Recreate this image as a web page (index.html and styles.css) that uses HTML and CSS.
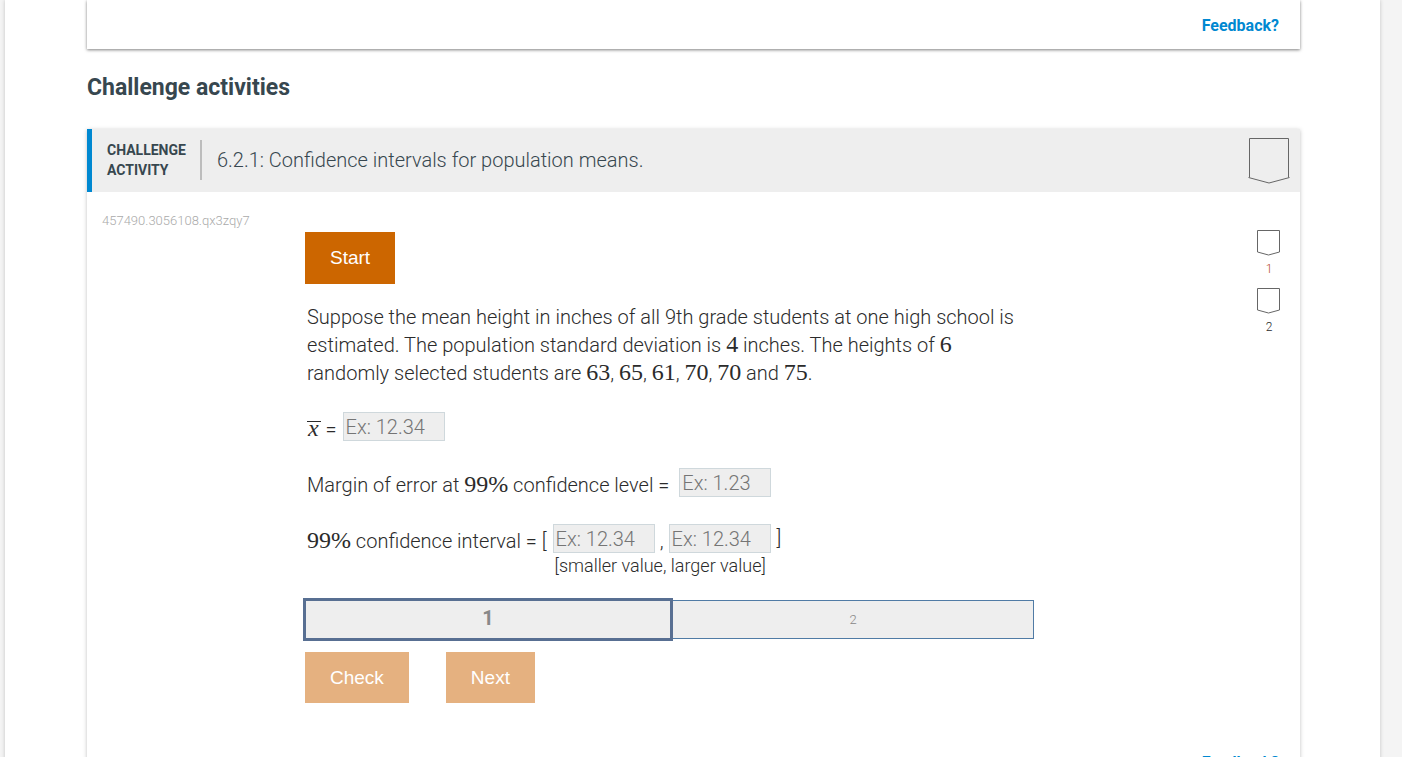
FILE: index.html
```html
<!DOCTYPE html>
<html lang="en">
  <head>
    <meta charset="UTF-8" />
    <meta name="viewport" content="width=device-width, initial-scale=1.0" />
    <title>Challenge activities</title>
    <link rel="stylesheet" href="styles.css" />
  </head>
  <body>
    <main class="page">
      <section class="card card-previous">
        <a class="feedback" href="#">Feedback?</a>
      </section>

      <h2 class="section-title">Challenge activities</h2>

      <section class="card activity">
        <header class="activity-header">
          <div class="activity-type">CHALLENGE<br />ACTIVITY</div>
          <h3 class="activity-title">6.2.1: Confidence intervals for population means.</h3>
          <svg class="badge-large" width="42" height="46" viewBox="0 0 42 46">
            <path d="M1.5 39.5V.5h39v39M.5 39.5l20.5 5.5 20.5-5.5" />
          </svg>
        </header>

        <div class="activity-body">
          <div class="activity-id">457490.3056108.qx3zqy7</div>

          <form class="question">
            <button class="btn" type="button">Start</button>

            <div class="prompt">
              <p class="statement">
                Suppose the mean height in inches of all 9th grade students at one high school is
                estimated. The population standard deviation is <span class="math">4</span> inches.
                The heights of <span class="math">6</span> randomly selected students are
                <span class="math">63</span>, <span class="math">65</span>,
                <span class="math">61</span>, <span class="math">70</span>,
                <span class="math">70</span> and <span class="math">75</span>.
              </p>

              <div class="row">
                <label for="mean"><span class="math mean">x</span> =</label>
                <input type="text" id="mean" placeholder="Ex: 12.34" />
              </div>

              <div class="row row-margin">
                <label for="margin">Margin of error at <span class="math">99%</span> confidence level =</label>
                <input class="short" type="text" id="margin" placeholder="Ex: 1.23" />
              </div>

              <div class="row">
                <label for="lower"><span class="math">99%</span> confidence interval = [</label>
                <div class="interval">
                  <div class="interval-fields">
                    <input type="text" id="lower" placeholder="Ex: 12.34" />
                    <label class="comma" for="upper">,</label>
                    <input type="text" id="upper" placeholder="Ex: 12.34" />
                  </div>
                  <div class="hint">[smaller value, larger value]</div>
                </div>
                <span class="bracket">]</span>
              </div>
            </div>

            <div class="steps">
              <div class="step current">1</div>
              <div class="step">2</div>
            </div>

            <div class="actions">
              <button class="btn" type="button" disabled>Check</button>
              <button class="btn" type="button" disabled>Next</button>
            </div>
          </form>

          <div class="levels">
            <div class="level">
              <svg width="24" height="27" viewBox="0 0 24 27">
                <path d="M.5 22V.5h22V22L11.5 25z" />
              </svg>
              <span class="level-current">1</span>
            </div>
            <div class="level">
              <svg width="24" height="27" viewBox="0 0 24 27">
                <path d="M.5 22V.5h22V22L11.5 25z" />
              </svg>
              <span>2</span>
            </div>
          </div>
        </div>

        <a class="feedback" href="#">Feedback?</a>
      </section>
    </main>
  </body>
</html>
```
FILE: styles.css
```css
* {
  box-sizing: border-box;
}

body {
  margin: 0;
  height: 100vh;
  overflow: hidden;
  padding: 0 22px 0 5px;
  background-color: #f4f4f4;
  font-family: Roboto, "Liberation Sans", sans-serif;
  font-size: 20px;
  font-weight: 300;
  line-height: 28px;
  color: #2b2b2b;
}

.page {
  padding: 0 80px 0 82px;
  background: #fff;
  box-shadow: 0 0 4px rgba(0, 0, 0, 0.2);
}

.card {
  display: flex;
  flex-direction: column;
  background: #fff;
  box-shadow: 0 1px 4px rgba(0, 0, 0, 0.25);
}

.card-previous {
  padding: 12px 0 9px;
  box-shadow: 0 1px 3px rgba(0, 0, 0, 0.5);
}

.feedback {
  align-self: flex-end;
  margin-right: 21px;
  font-size: 16px;
  font-weight: 700;
  color: #0088d1;
  text-decoration: none;
}

.section-title {
  margin: 25px 0 27px;
  font-size: 23px;
  font-weight: 700;
  color: #37474f;
}

.activity {
  padding-bottom: 10px;
}

.activity-header {
  display: flex;
  align-items: center;
  height: 63px;
  padding: 0 10px 2px 15px;
  border-left: 5px solid #0088d1;
  background: #eee;
  color: #37474f;
}

.activity-type {
  padding-right: 14px;
  border-right: 2px solid #bdbdbd;
  font-size: 14px;
  font-weight: 700;
  line-height: 20px;
}

.activity-title {
  flex: 1;
  margin: 0 0 0 15px;
  font-size: 20px;
  font-weight: 300;
}

svg {
  fill: none;
  stroke: #666;
}

.badge-large {
  align-self: flex-end;
  margin-bottom: 6px;
}

.activity-body {
  display: grid;
  grid-template-columns: 201px minmax(0, 731px) 1fr;
  padding: 15px 19px 46px 15px;
}

.activity-id {
  font-size: 13px;
  color: #aaa;
}

.question {
  padding-top: 25px;
}

.btn {
  display: block;
  height: 52px;
  margin-left: 2px;
  padding: 0 25px;
  border: none;
  background: #cc6600;
  color: #fff;
  font-family: "Liberation Sans", Arial, sans-serif;
  font-size: 19px;
}

.btn:disabled {
  height: 51px;
  background: #e5b180;
}

.prompt {
  display: flex;
  flex-direction: column;
  gap: 21px;
  padding: 19px 0 0 4px;
}

.statement {
  margin: 0 0 4px;
}

/* numbers set as formulas */
.math {
  font-family: "Liberation Serif", serif;
  font-size: 24px;
  font-weight: 400;
  line-height: 20px;
}

.mean {
  display: inline-block;
  padding: 0 2px 0 1px;
  border-top: 1px solid #2b2b2b;
  font-style: italic;
  line-height: 12px;
}

.row {
  display: flex;
  align-items: flex-start;
  gap: 6px;
  line-height: 35px;
}

.row-margin {
  gap: 10px;
}

input {
  width: 102px;
  height: 29px;
  padding: 0 2px;
  border: 1px solid #cfd8dc;
  background: #eee;
  font-family: Roboto, sans-serif;
  font-size: 20px;
  font-weight: 300;
  color: #2b2b2b;
}

input::placeholder {
  color: #757575;
}

.short {
  width: 92px;
}

.interval-fields {
  display: flex;
}

.comma {
  width: 14px;
  text-align: center;
}

.hint {
  padding-left: 2px;
  font-size: 18px;
  line-height: 14px;
}

.bracket {
  line-height: 29px;
}

.steps {
  display: flex;
  align-items: center;
  margin-top: 25px;
}

.step {
  flex: 1;
  height: 39px;
  border: 1px solid #507ba5;
  border-left: none;
  background: #eee;
  font-size: 13px;
  line-height: 37px;
  text-align: center;
  color: #888;
}

.step.current {
  flex: 0 0 370px;
  height: 43px;
  border: 3px solid #586f92;
  font-size: 20px;
  font-weight: 700;
  line-height: 35px;
}

.actions {
  display: flex;
  gap: 35px;
  margin-top: 11px;
}

.levels {
  justify-self: end;
  padding-top: 23px;
}

.level {
  display: flex;
  flex-direction: column;
  align-items: center;
  height: 58px;
  font-size: 12px;
  line-height: 24px;
}

.level-current {
  color: #b5451d;
}
```
